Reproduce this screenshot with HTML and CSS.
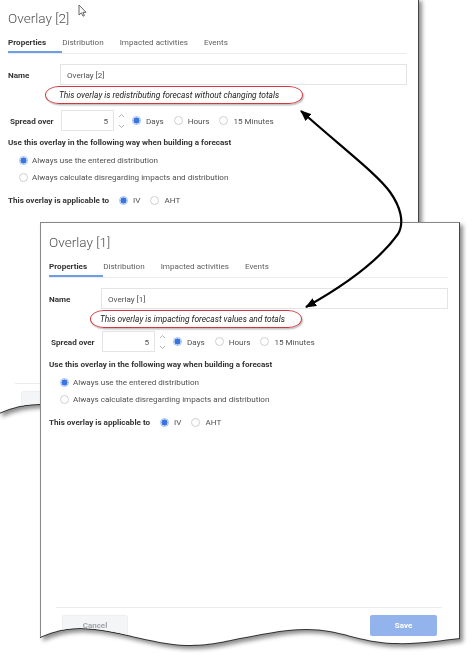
FILE: index.html
```html
<!DOCTYPE html>
<html lang="en">
<head>
  <meta charset="UTF-8" />
  <meta name="viewport" content="width=device-width, initial-scale=1.0" />
  <title>Overlay properties</title>
  <link rel="stylesheet" href="styles.css">
</head>
<body>
  <div class="canvas">

    <!-- back window -->
    <div class="sheet sheet-back">
      <div class="panel">
        <div class="title">Overlay [2]</div>
        <div class="tabs">
          <span class="tab active">Properties</span>
          <span class="tab">Distribution</span>
          <span class="tab">Impacted activities</span>
          <span class="tab">Events</span>
        </div>

        <div class="row name-row">
          <label class="label">Name</label>
          <input class="text-input" type="text" value="Overlay [2]" readonly />
        </div>
        <div class="note-row">
          <span class="note note-back">This overlay is redistributing forecast without changing totals</span>
        </div>

        <div class="row spread-row">
          <label class="label label-spread">Spread over</label>
          <input class="num-input" type="text" value="5" readonly />
          <span class="spinner">
            <svg width="7" height="16" viewBox="0 0 7 16"><polyline points="1,4 3.5,1.5 6,4" /><polyline points="1,12 3.5,14.5 6,12" /></svg>
          </span>
          <span class="opt"><span class="radio on"></span>Days</span>
          <span class="opt"><span class="radio"></span>Hours</span>
          <span class="opt"><span class="radio"></span>15 Minutes</span>
        </div>

        <div class="heading">Use this overlay in the following way when building a forecast</div>
        <div class="choice first"><span class="radio on"></span>Always use the entered distribution</div>
        <div class="choice"><span class="radio"></span>Always calculate disregarding impacts and distribution</div>

        <div class="row applies-row">
          <span class="label label-wide">This overlay is applicable to</span>
          <span class="opt"><span class="radio on"></span>IV</span>
          <span class="opt"><span class="radio"></span>AHT</span>
        </div>

        <div class="footer">
          <button class="btn btn-cancel">Cancel</button>
          <button class="btn btn-save">Save</button>
        </div>
      </div>
    </div>

    <!-- front window -->
    <div class="sheet sheet-front">
      <div class="panel">
        <div class="title">Overlay [1]</div>
        <div class="tabs">
          <span class="tab active">Properties</span>
          <span class="tab">Distribution</span>
          <span class="tab">Impacted activities</span>
          <span class="tab">Events</span>
        </div>

        <div class="row name-row">
          <label class="label">Name</label>
          <input class="text-input" type="text" value="Overlay [1]" readonly />
        </div>
        <div class="note-row">
          <span class="note note-front">This overlay is impacting forecast values and totals</span>
        </div>

        <div class="row spread-row spread-tight">
          <label class="label label-spread">Spread over</label>
          <input class="num-input" type="text" value="5" readonly />
          <span class="spinner">
            <svg width="7" height="16" viewBox="0 0 7 16"><polyline points="1,4 3.5,1.5 6,4" /><polyline points="1,12 3.5,14.5 6,12" /></svg>
          </span>
          <span class="opt"><span class="radio on"></span>Days</span>
          <span class="opt"><span class="radio"></span>Hours</span>
          <span class="opt"><span class="radio"></span>15 Minutes</span>
        </div>

        <div class="heading">Use this overlay in the following way when building a forecast</div>
        <div class="choice first"><span class="radio on"></span>Always use the entered distribution</div>
        <div class="choice"><span class="radio"></span>Always calculate disregarding impacts and distribution</div>

        <div class="row applies-row">
          <span class="label label-wide">This overlay is applicable to</span>
          <span class="opt"><span class="radio on"></span>IV</span>
          <span class="opt"><span class="radio"></span>AHT</span>
        </div>

        <div class="footer">
          <button class="btn btn-cancel">Cancel</button>
          <button class="btn btn-save">Save</button>
        </div>
      </div>
    </div>

    <!-- callout arrow between the two notes -->
    <svg class="arrow" width="474" height="660" viewBox="0 0 474 660">
      <defs>
        <marker id="head" markerUnits="userSpaceOnUse" markerWidth="11" markerHeight="9" refX="10" refY="4.5" orient="auto-start-reverse">
          <path d="M0,0 L11,4.5 L0,9 Z" fill="#000" />
        </marker>
      </defs>
      <path d="M301,111 C345,150 378,175 390,192 C400,206 405,222 398,234 C378,262 340,288 306,307" fill="none" stroke="#000" stroke-width="2.2" marker-start="url(#head)" marker-end="url(#head)" />
    </svg>

    <svg class="cursor" width="10" height="13" viewBox="0 0 10 13">
      <path d="M1,1 L1,11 L3.4,8.8 L5,12.2 L6.4,11.6 L4.9,8.3 L8,8.3 Z" fill="#fff" stroke="#555" stroke-width="0.9" stroke-linejoin="round" />
    </svg>
  </div>
</body>
</html>
```

FILE: styles.css
```css
body {
  margin: 0;
  background: #fff;
  font-family: Roboto, "Noto Sans", Arial, sans-serif;
}
.canvas {
  position: relative;
  width: 474px;
  height: 660px;
  overflow: hidden;
}

/* torn-paper windows */
.sheet {
  position: absolute;
  width: 420px;
  height: 430px;
  filter: drop-shadow(0 1px 0 #333) drop-shadow(3px 3px 2px rgba(0,0,0,0.45));
}
.sheet-back {
  left: -1px;
  top: -2px;
}
.sheet-front {
  left: 40px;
  top: 222px;
}
.panel {
  box-sizing: border-box;
  width: 420px;
  height: 430px;
  background: #fff;
  border: 1px solid #888;
  border-right-color: #444;
  padding: 9px 11px 0 8px;
  display: flex;
  flex-direction: column;
  font-size: 8.1px;
  color: #505050;
  clip-path: path('M0,0 H420 V416 C400,418 380,422 353,421 C320,420 300,407 267,407 C240,407 220,413 200,416 C180,420 170,423 147,423 C110,422 75,406 40,406 C20,406 8,412 0,415 Z');
}

.title {
  font-size: 13.6px;
  line-height: 20px;
  font-weight: 300;
  color: #505050;
}
.tabs {
  display: flex;
  border-bottom: 1px solid #ececec;
}
.tab {
  padding: 7px 16px 2px 0;
  line-height: 14px;
  color: #606060;
  border-bottom: 2px solid transparent;
}
.tab.active {
  font-weight: bold;
  color: #333;
  border-bottom-color: #6d9de6;
}

.row {
  display: flex;
  align-items: center;
}
.label {
  font-weight: bold;
  color: #333;
  width: 52px;
  flex-shrink: 0;
}
.label-spread {
  box-sizing: border-box;
  width: 53px;
  padding-left: 2px;
}
.label-wide {
  width: auto;
  margin-right: 10px;
}
.name-row {
  margin-top: 10px;
}
.text-input,
.num-input {
  box-sizing: border-box;
  height: 21px;
  border: 1px solid #e4e4e4;
  background: #fff;
  font-family: inherit;
  font-size: 8.1px;
  color: #505050;
  outline: none;
  margin: 0;
}
.text-input {
  flex: 1;
  min-width: 0;
  padding: 0 6px;
}
.num-input {
  width: 53px;
  padding: 0 5px;
  text-align: right;
}

.note-row {
  margin-top: 1px;
  margin-left: 37px;
}
.note {
  display: inline-block;
  font-style: italic;
  font-size: 8.4px;
  line-height: 16px;
  color: #222;
  border: 1.5px solid #d3343e;
  border-radius: 14px / 9px;
  box-shadow: 1px 1.5px 1.5px rgba(0,0,0,0.25);
}
.note-back {
  padding: 0 23px 0 13px;
}
.note-front {
  margin-left: 4px;
  padding: 0 16px 0 9px;
}

.spread-row {
  margin-top: 6px;
}
.spread-tight {
  margin-top: 3px;
}
.spinner {
  width: 14px;
  display: flex;
  justify-content: center;
  margin-right: 4px;
}
.spinner polyline {
  fill: none;
  stroke: #aaa;
  stroke-width: 0.9;
}
.opt {
  display: flex;
  align-items: center;
  gap: 5px;
  margin-right: 10px;
}

.radio {
  box-sizing: border-box;
  width: 9px;
  height: 9px;
  border-radius: 50%;
  border: 1px solid #cfcfcf;
  background: #fff;
  flex-shrink: 0;
}
.radio.on {
  border-color: #9dbcf0;
  background: radial-gradient(circle, #3a75df 0 2.8px, #fff 3.3px);
}

.heading {
  margin-top: 5px;
  line-height: 12px;
  font-weight: bold;
  color: #333;
}
.spread-tight + .heading {
  margin-top: 6px;
}
.choice {
  display: flex;
  align-items: center;
  gap: 4px;
  line-height: 12px;
  padding-left: 11px;
  margin-top: 5px;
}
.choice.first {
  margin-top: 6px;
}
.applies-row {
  margin-top: 11px;
  line-height: 12px;
}

.footer {
  margin: auto 6px 0 7px;
  border-top: 1px solid #ededed;
  padding: 7px 0 15px;
  display: flex;
  justify-content: space-between;
}
.btn {
  height: 21px;
  border: none;
  border-radius: 2px;
  font-family: inherit;
  font-size: 8px;
  font-weight: bold;
}
.btn-cancel {
  width: 66px;
  margin-left: 6px;
  background: #f4f5f7;
  border: 1px solid #eceef1;
  color: #a0a4aa;
}
.btn-save {
  width: 67px;
  margin-right: 5px;
  background: #93b3ec;
  color: #fff;
}

.arrow {
  position: absolute;
  left: 0;
  top: 0;
  pointer-events: none;
}
.cursor {
  position: absolute;
  left: 78px;
  top: 4px;
}
```
